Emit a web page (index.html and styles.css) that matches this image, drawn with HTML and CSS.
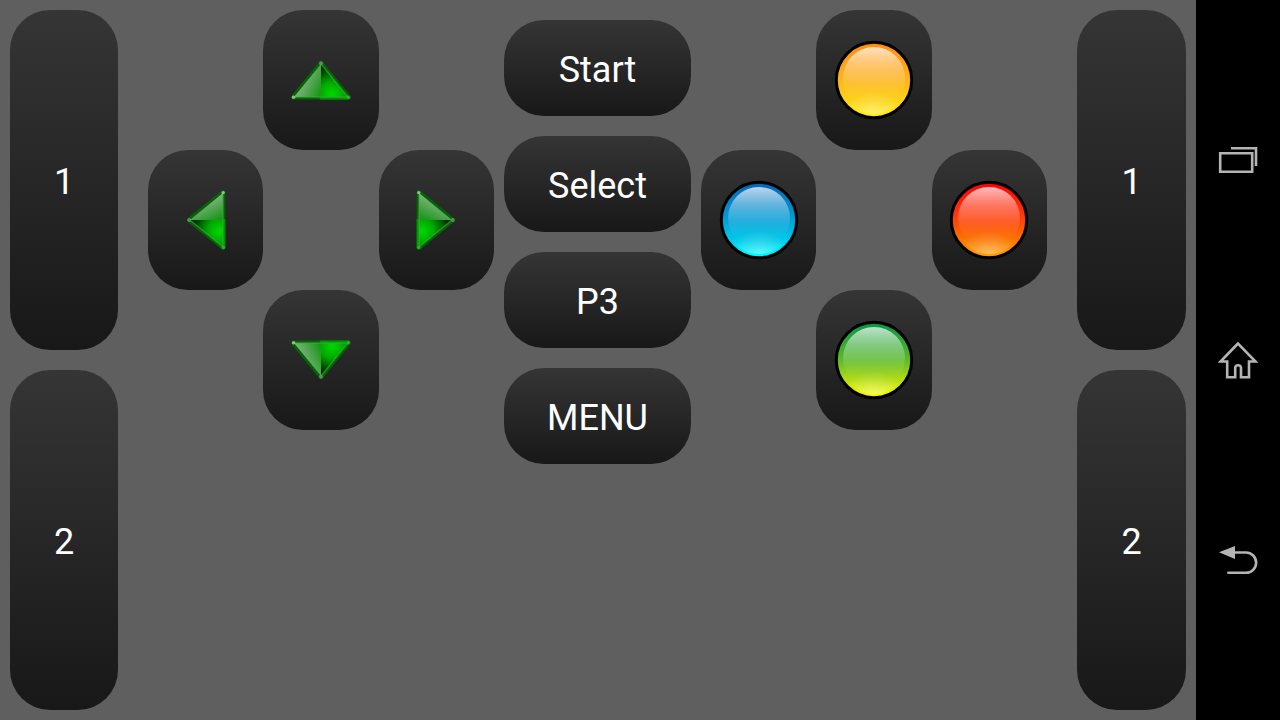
FILE: index.html
```html
<!DOCTYPE html>
<html lang="en">
<head>
  <meta charset="UTF-8">
  <meta name="viewport" content="width=device-width, initial-scale=1.0">
  <title>Gamepad</title>
  <link rel="stylesheet" href="styles.css">
</head>
<body>
  <!-- Shared icon shapes -->
  <svg class="defs" width="0" height="0" aria-hidden="true">
    <defs>
      <linearGradient id="arrowLight" x1="0" y1="0.2" x2="1" y2="0.8">
        <stop offset="0" stop-color="#a8d4a8"/>
        <stop offset="0.45" stop-color="#6fae6f"/>
        <stop offset="1" stop-color="#1c961c"/>
      </linearGradient>
      <radialGradient id="arrowDark" gradientUnits="userSpaceOnUse" cx="41" cy="34" r="27">
        <stop offset="0" stop-color="#00d800"/>
        <stop offset="0.45" stop-color="#00a800"/>
        <stop offset="1" stop-color="#002c00"/>
      </radialGradient>
      <g id="arrow">
        <path d="M30 3.2 L2.2 37.2 H57.8 Z" fill="#045a04" stroke="#046404" stroke-width="4.4" stroke-linejoin="round"/>
        <path d="M30 38.2 H57.5" stroke="#009400" stroke-width="2.4" stroke-linecap="round"/>
        <path d="M30 4 V37 H3 Z" fill="url(#arrowLight)"/>
        <path d="M30 4 V37 H57 Z" fill="url(#arrowDark)"/>
        <path d="M30 4 L57 37 H3" fill="none" stroke="#3fae3f" stroke-opacity="0.6" stroke-width="1.4"/>
        <circle cx="30" cy="3.2" r="2" fill="#5c9c5c" fill-opacity="0.85"/>
        <circle cx="2.6" cy="37.2" r="1.7" fill="#a4cca4" fill-opacity="0.85"/>
        <circle cx="57.4" cy="37.2" r="1.7" fill="#38b038" fill-opacity="0.85"/>
      </g>

      <linearGradient id="yellow" x1="0" y1="0" x2="0" y2="1">
        <stop offset="0" stop-color="#ff8a12"/>
        <stop offset="0.5" stop-color="#fdb51c"/>
        <stop offset="0.8" stop-color="#fbd616"/>
        <stop offset="1" stop-color="#fff21c"/>
      </linearGradient>
      <linearGradient id="blue" x1="0" y1="0" x2="0" y2="1">
        <stop offset="0" stop-color="#0565b8"/>
        <stop offset="0.5" stop-color="#02a0d6"/>
        <stop offset="0.8" stop-color="#00d0ec"/>
        <stop offset="1" stop-color="#0ff"/>
      </linearGradient>
      <linearGradient id="red" x1="0" y1="0" x2="0" y2="1">
        <stop offset="0" stop-color="#fb0007"/>
        <stop offset="0.5" stop-color="#ff4208"/>
        <stop offset="0.8" stop-color="#fa7c00"/>
        <stop offset="1" stop-color="#ffa30a"/>
      </linearGradient>
      <linearGradient id="green" x1="0" y1="0" x2="0" y2="1">
        <stop offset="0" stop-color="#079444"/>
        <stop offset="0.5" stop-color="#5cba2a"/>
        <stop offset="0.8" stop-color="#bfe010"/>
        <stop offset="1" stop-color="#ff0"/>
      </linearGradient>
      <linearGradient id="gloss" x1="0" y1="0" x2="0" y2="1">
        <stop offset="0" stop-color="#fff" stop-opacity="0.72"/>
        <stop offset="0.3" stop-color="#fff" stop-opacity="0.36"/>
        <stop offset="0.6" stop-color="#fff" stop-opacity="0.1"/>
        <stop offset="0.85" stop-color="#fff" stop-opacity="0"/>
      </linearGradient>
      <radialGradient id="shine" gradientUnits="userSpaceOnUse" cx="40" cy="74" r="32" gradientTransform="matrix(1 0 0 0.7 0 22)">
        <stop offset="0" stop-color="#fff" stop-opacity="0.36"/>
        <stop offset="1" stop-color="#fff" stop-opacity="0"/>
      </radialGradient>
      <g id="glass">
        <circle cx="40" cy="40" r="34" fill="url(#shine)"/>
        <circle cx="40" cy="38" r="31" fill="url(#gloss)"/>
      </g>
    </defs>
  </svg>

  <main class="gamepad">
    <div class="shoulder">
      <button class="key">1</button>
      <button class="key">2</button>
    </div>

    <div class="cross arrows">
      <button class="key up" aria-label="Up">
        <svg width="60" height="40"><use href="#arrow"/></svg>
      </button>
      <button class="key left" aria-label="Left">
        <svg width="40" height="60"><use href="#arrow" transform="matrix(0 1 1 0 0 0)"/></svg>
      </button>
      <button class="key right" aria-label="Right">
        <svg width="40" height="60"><use href="#arrow" transform="matrix(0 1 -1 0 40 0)"/></svg>
      </button>
      <button class="key down" aria-label="Down">
        <svg width="60" height="40"><use href="#arrow" transform="matrix(1 0 0 -1 0 40)"/></svg>
      </button>
    </div>

    <div class="options">
      <button class="key">Start</button>
      <button class="key">Select</button>
      <button class="key">P3</button>
      <button class="key">MENU</button>
    </div>

    <div class="cross colors">
      <button class="key up" aria-label="Yellow">
        <svg width="80" height="80"><circle cx="40" cy="40" r="37.7" fill="url(#yellow)" stroke="#000" stroke-width="3"/><use href="#glass"/></svg>
      </button>
      <button class="key left" aria-label="Blue">
        <svg width="80" height="80"><circle cx="40" cy="40" r="37.7" fill="url(#blue)" stroke="#000" stroke-width="3"/><use href="#glass"/></svg>
      </button>
      <button class="key right" aria-label="Red">
        <svg width="80" height="80"><circle cx="40" cy="40" r="37.7" fill="url(#red)" stroke="#000" stroke-width="3"/><use href="#glass"/></svg>
      </button>
      <button class="key down" aria-label="Green">
        <svg width="80" height="80"><circle cx="40" cy="40" r="37.7" fill="url(#green)" stroke="#000" stroke-width="3"/><use href="#glass"/></svg>
      </button>
    </div>

    <div class="shoulder">
      <button class="key">1</button>
      <button class="key">2</button>
    </div>
  </main>

  <nav class="navbar">
    <button aria-label="Recent apps">
      <svg width="40" height="40" viewBox="0 0 40 40">
        <path d="M2.2 13.2 H34.2 V31.8 H2.2 Z M13 8.2 H38 V26"/>
      </svg>
    </button>
    <button aria-label="Home">
      <svg width="40" height="40" viewBox="0 0 40 40">
        <path d="M20 3.5 L2.5 21.5 H9.2 V37.2 H17.2 V27.5 A3 3 0 0 1 23 27.5 V37.2 H31 V21.5 H37.5 Z"/>
      </svg>
    </button>
    <button aria-label="Back">
      <svg width="40" height="40" viewBox="0 0 40 40">
        <path d="M15 12.5 H28 A10 10 0 0 1 28 32.8 H9.3"/>
        <path class="solid" d="M1 12.3 L17 6 V19 Z"/>
      </svg>
    </button>
  </nav>
</body>
</html>
```
FILE: styles.css
```css
* {
  box-sizing: border-box;
}

body {
  margin: 0;
  min-height: 100vh;
  display: flex;
  background-color: #5f5f5f;
  font-family: Roboto, "Liberation Sans", sans-serif;
}

button {
  border: none;
  padding: 0;
  font-family: inherit;
  cursor: pointer;
}

svg {
  display: block;
}

.defs {
  position: absolute;
}

/* Controller */
.gamepad {
  flex: 1;
  display: grid;
  grid-template-columns: 108fr 30px 346fr 10px 187fr 10px 346fr 30px 109fr;
  padding: 10px;
}

.key {
  display: flex;
  justify-content: center;
  align-items: center;
  border-radius: 40px;
  background: linear-gradient(#353535, #181818);
  color: #fff;
  font-size: 36px;
  line-height: 44px;
}

.key:active {
  background: linear-gradient(#181818, #353535);
}

.shoulder {
  display: flex;
  flex-direction: column;
  gap: 20px;
}

.shoulder:last-child {
  grid-column: 9;
}

.shoulder .key {
  flex: 1;
  padding-top: 4px;
}

.cross {
  display: grid;
  grid-template-columns: repeat(3, 1fr);
  grid-template-rows: repeat(3, 140px);
}

.arrows {
  grid-column: 3;
}

.colors {
  grid-column: 7;
}

.up {
  grid-area: 1 / 2;
}

.left {
  grid-area: 2 / 1;
}

.right {
  grid-area: 2 / 3;
}

.down {
  grid-area: 3 / 2;
}

.options {
  grid-column: 5;
  display: flex;
  flex-direction: column;
  gap: 20px;
  padding: 10px 0;
}

.options .key {
  height: 96px;
  padding-top: 4px;
}

/* System bar */
.navbar {
  width: 84px;
  padding: 60px 0;
  display: flex;
  flex-direction: column;
  background-color: #000;
}

.navbar button {
  flex: 1;
  display: flex;
  justify-content: center;
  align-items: center;
  background: none;
}

.navbar path {
  fill: none;
  stroke: #b4b4b4;
  stroke-width: 2.6;
}

.navbar .solid {
  fill: #b4b4b4;
  stroke: none;
}
```
